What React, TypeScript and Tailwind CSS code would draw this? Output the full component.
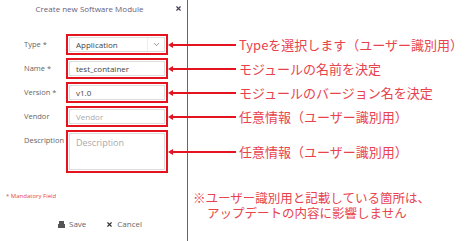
import { ChevronDown, X } from "lucide-react";

const jp = { fontFamily: '"Noto Sans CJK JP", "Noto Sans", sans-serif' };

function Arrow() {
  return (
    <svg width="68" height="8" viewBox="0 0 68 8" className="flex-none">
      <line x1="3" y1="4" x2="68" y2="4" stroke="#e3131f" strokeWidth="2" />
      <polygon points="0,4 5,1 5,7" fill="#e3131f" />
    </svg>
  );
}

function Row({
  label,
  note,
  children,
  tall,
}: {
  label: string;
  note: string;
  children: React.ReactNode;
  tall?: boolean;
}) {
  return (
    <div className="flex items-start">
      <div className="w-[66px] flex-none pl-6 text-[7.5px] text-[#666] whitespace-nowrap" style={{ lineHeight: "21px" }}>
        {label}
      </div>
      <div className={`w-[102px] flex-none border-2 border-[#e3131f] p-px ${tall ? "h-[43px]" : "h-[21px]"}`}>
        {children}
      </div>
      <div className={`flex items-center flex-none ${tall ? "h-[43px]" : "h-[21px]"}`}>
        <Arrow />
        <span className="ml-[3px] text-[13px] text-[#e8434d] whitespace-nowrap" style={jp}>
          {note}
        </span>
      </div>
    </div>
  );
}

export default function App() {
  return (
    <div className="w-[474px] h-[241px] bg-white overflow-hidden flex" style={{ fontFamily: '"Open Sans", sans-serif' }}>
      {/* dialog */}
      <div className="w-[188px] flex-none border-r border-[#666] flex flex-col">
        <div className="h-[17px] flex items-center relative">
          <span className="w-full text-center pr-[8px] text-[8px] text-[#6b5d7a]">Create new Software Module</span>
          <X className="absolute left-[175px] top-[5px] w-[7px] h-[7px] text-[#4a3a5c]" strokeWidth={4} />
        </div>

        <div className="mt-[17px] flex flex-col gap-[3px]">
          <Row label="Type *" note="Typeを選択します（ユーザー識別用）">
            <div className="h-full border border-[#ddd] flex items-center text-[8px] text-[#444]">
              <span className="flex-1 pl-[6px]">Application</span>
              <span className="h-full w-[17px] border-l border-[#eee] flex items-center justify-center">
                <ChevronDown className="w-[9px] h-[9px] text-[#777]" strokeWidth={2} />
              </span>
            </div>
          </Row>
          <Row label="Name *" note="モジュールの名前を決定">
            <div className="h-full border border-[#ddd] flex items-center pl-[6px] text-[8px] text-[#444]">test_container</div>
          </Row>
          <Row label="Version *" note="モジュールのバージョン名を決定">
            <div className="h-full border border-[#ddd] flex items-center pl-[6px] text-[8px] text-[#444]">v1.0</div>
          </Row>
          <Row label="Vendor" note="任意情報（ユーザー識別用）">
            <div className="h-full border border-[#ddd] flex items-center pl-[6px] text-[8px] text-[#aaa]">Vendor</div>
          </Row>
          <Row label="Description" note="任意情報（ユーザー識別用）" tall>
            <div className="h-full border border-[#ddd] pl-[6px] pt-[2px] text-[9px] text-[#aaa]">Description</div>
          </Row>
        </div>

        <div className="mt-[19px] pl-[6px] text-[6px] text-[#e8434d]">* Mandatory Field</div>

        <div className="mt-[17px] flex items-center pl-[58px] gap-[20px] text-[8px] text-[#666]">
          <span className="flex items-center gap-[4px]">
            <svg width="7" height="7" viewBox="0 0 7 7">
              <path d="M1 0h5v3H1z M0 3h7v4H0z" fill="#555" />
            </svg>
            Save
          </span>
          <span className="flex items-center gap-[4px]">
            <X className="w-[7px] h-[7px] text-[#333]" strokeWidth={4} />
            Cancel
          </span>
        </div>
      </div>

      {/* note */}
      <div className="flex-1 flex flex-col justify-end gap-[1px] pb-[21px] text-[12.5px] leading-[14px] text-[#e8434d] whitespace-nowrap" style={jp}>
        <div className="pl-[5px]">※ユーザー識別用と記載している箇所は、</div>
        <div className="pl-[19px]">アップデートの内容に影響しません</div>
      </div>
    </div>
  );
}
